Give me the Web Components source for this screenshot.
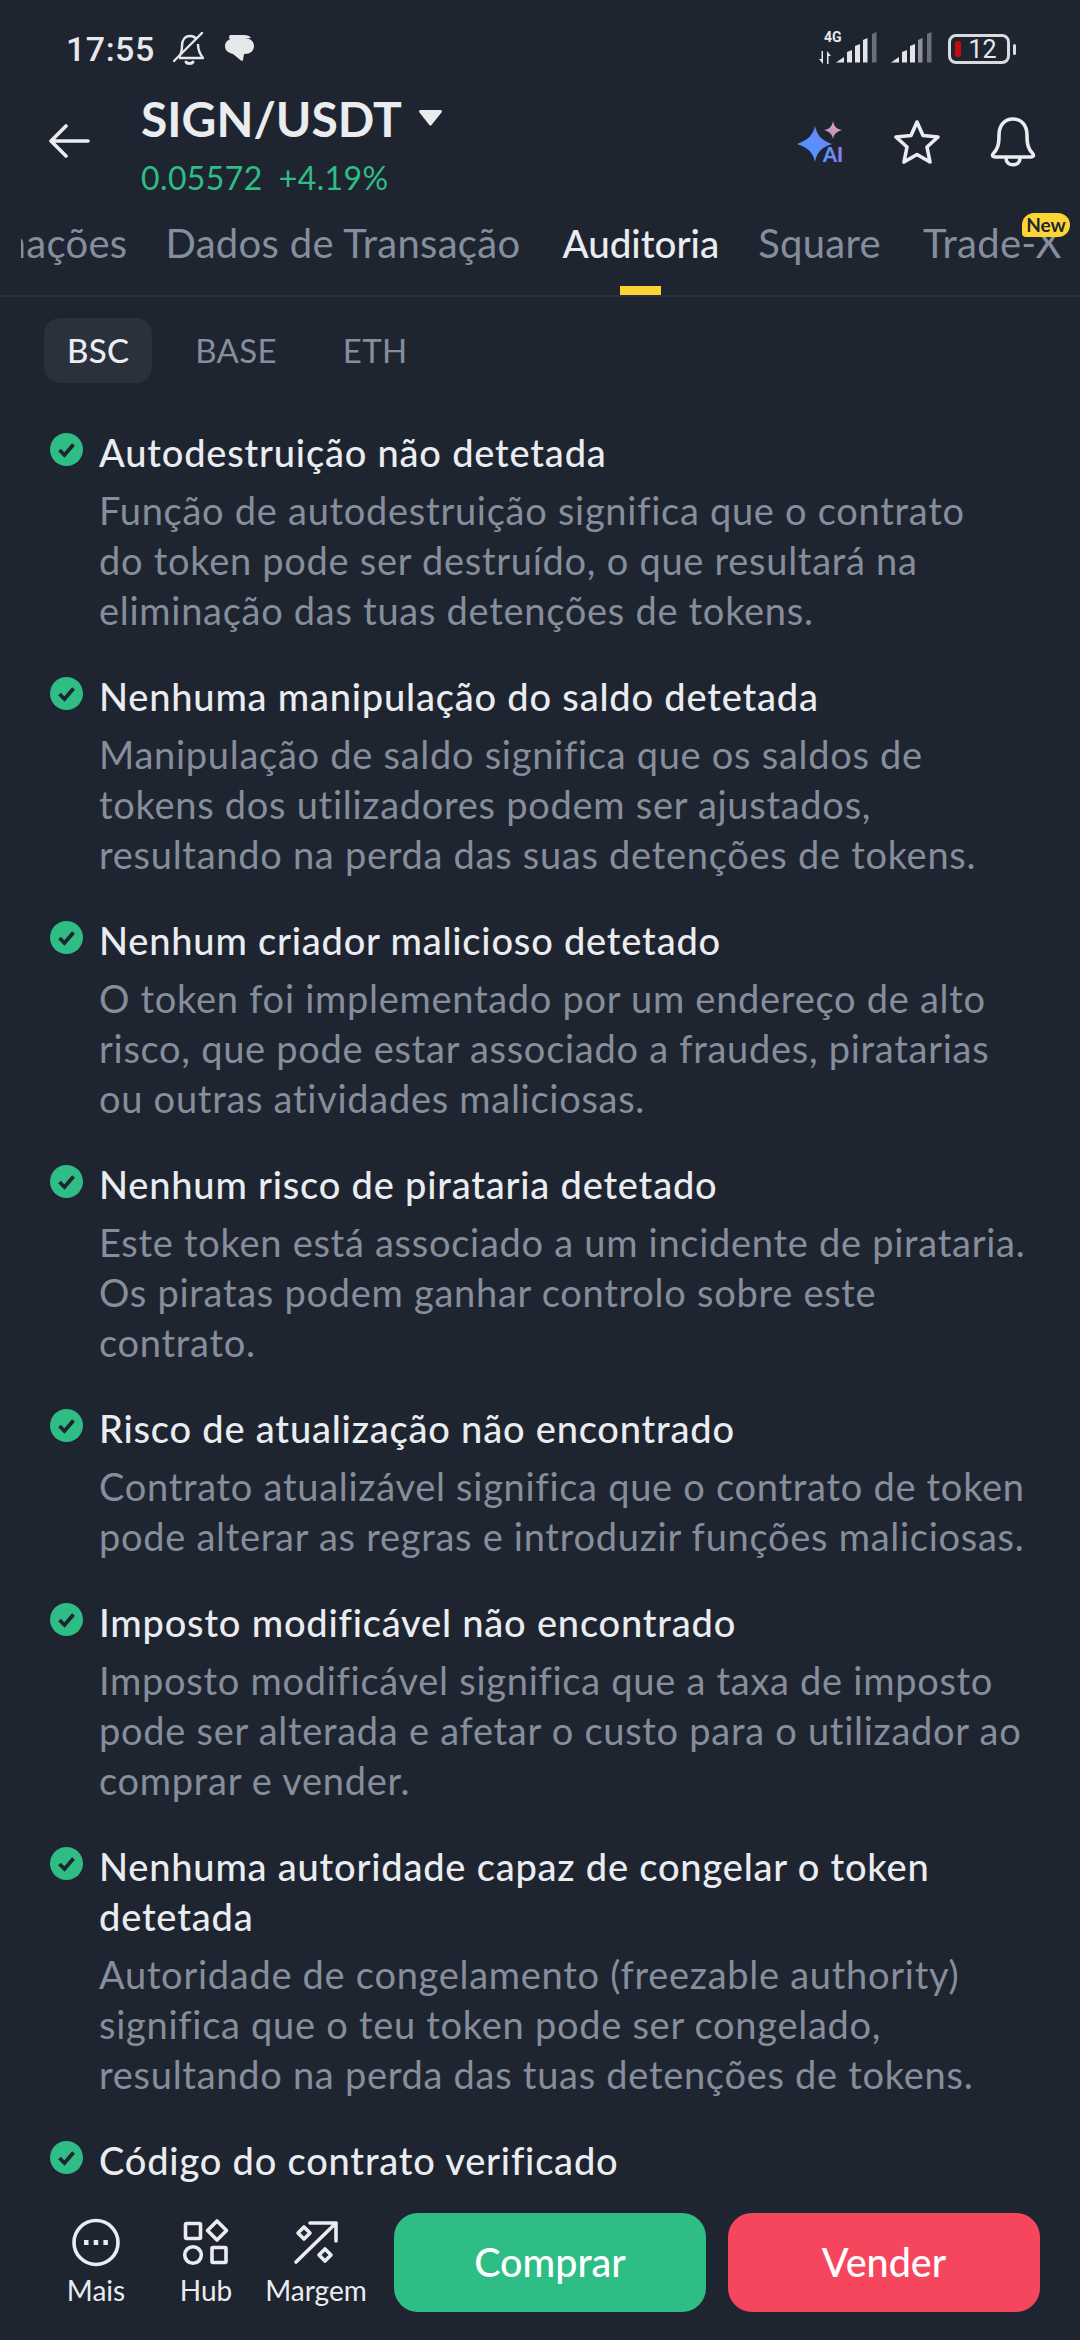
<!DOCTYPE html>
<html lang="pt">
<head>
<meta charset="utf-8">
<title>SIGN/USDT Auditoria</title>
<style>
  html, body { margin: 0; height: 100%; background: #1f2530; }
  body { font-family: Lato, "Noto Sans", sans-serif; }
</style>
</head>
<body>
<app-screen>
  <status-bar></status-bar>
  <market-header pair="SIGN/USDT" price="0.05572" change="+4.19%"></market-header>
  <tab-strip></tab-strip>
  <chain-pills></chain-pills>
  <audit-list>
    <audit-item heading="Autodestruição não detetada">Função de autodestruição significa que o contrato
do token pode ser destruído, o que resultará na
eliminação das tuas detenções de tokens.</audit-item>
    <audit-item heading="Nenhuma manipulação do saldo detetada">Manipulação de saldo significa que os saldos de
tokens dos utilizadores podem ser ajustados,
resultando na perda das suas detenções de tokens.</audit-item>
    <audit-item heading="Nenhum criador malicioso detetado">O token foi implementado por um endereço de alto
risco, que pode estar associado a fraudes, piratarias
ou outras atividades maliciosas.</audit-item>
    <audit-item heading="Nenhum risco de pirataria detetado">Este token está associado a um incidente de pirataria.
Os piratas podem ganhar controlo sobre este
contrato.</audit-item>
    <audit-item heading="Risco de atualização não encontrado">Contrato atualizável significa que o contrato de token
pode alterar as regras e introduzir funções maliciosas.</audit-item>
    <audit-item heading="Imposto modificável não encontrado">Imposto modificável significa que a taxa de imposto
pode ser alterada e afetar o custo para o utilizador ao
comprar e vender.</audit-item>
    <audit-item heading="Nenhuma autoridade capaz de congelar o token
detetada">Autoridade de congelamento (freezable authority)
significa que o teu token pode ser congelado,
resultando na perda das tuas detenções de tokens.</audit-item>
    <audit-item heading="Código do contrato verificado"></audit-item>
  </audit-list>
  <action-bar></action-bar>
</app-screen>

<script>
class AppScreen extends HTMLElement {
  constructor() {
    super();
    this.attachShadow({ mode: 'open' });
    this.shadowRoot.innerHTML = `
      <style>
        :host {
          display: flex;
          flex-direction: column;
          height: 2340px;
          overflow: hidden;
          background: #1f2530;
          color: #eaecef;
        }
      </style>
      <slot></slot>
    `;
  }
}

class StatusBar extends HTMLElement {
  constructor() {
    super();
    this.attachShadow({ mode: 'open' });
    this.shadowRoot.innerHTML = `
      <style>
        :host {
          display: flex;
          align-items: center;
          flex: none;
          height: 92px;
          padding: 6px 64px 0 66px;
          box-sizing: border-box;
          color: #e6e8ec;
        }
        .time { font: 500 34px Roboto, sans-serif; letter-spacing: .5px; }
        .left { display: flex; align-items: center; }
        .bell { margin-left: 18px; }
        .chat { margin-left: 19px; }
        .right { margin-left: auto; display: flex; align-items: center; height: 34px; }
        .net { position: relative; width: 58px; height: 34px; }
        .net b { position: absolute; left: 5px; top: -3px; font: 700 14px Roboto, sans-serif; }
        .batt {
          position: relative; display: flex; align-items: center; justify-content: center;
          width: 62px; height: 30px; margin-left: 16px; box-sizing: border-box;
          border: 3px solid #d9dbdf; border-radius: 8px;
          font: 400 25px/1 Roboto, sans-serif; padding-left: 7px;
        }
        .batt i { position: absolute; left: 4px; top: 4px; width: 6px; height: 16px; background: #c00d0d; border-radius: 2px; }
        .nub { width: 3px; height: 11px; margin-left: 3px; background: #d9dbdf; border-radius: 2px; }
        svg { display: block; }
      </style>
      <div class="left">
        <span class="time">17:55</span>
        <svg class="bell" width="33" height="34" viewBox="0 0 33 34" fill="none" stroke="#e6e8ec" stroke-width="2.4" stroke-linejoin="round">
          <path d="M6 25c2-3 3-6 3-11 0-6 3-10 8-10 3 0 5 1 6.500 3M25 12c0 5 1 9 5 14H6"/>
          <path d="M13 30c1 2 6 2 7 0" stroke-width="3" stroke-linecap="round"/>
          <path d="M1 29L29 1" stroke-linecap="round"/>
        </svg>
        <svg class="chat" width="29" height="30" viewBox="0 0 29 30" fill="#e6e8ec">
          <path d="M5 1h14c3 0 6 1 7 3l-20 1C4 5 3 4 5 1z"/>
          <path d="M11 4h8c6 0 10 3 10 8s-4 8-9 8h-1l-1 6c-.3 1-1 1-2 .5L8 20c-4-1-8-3-8-8s5-8 11-8z"/>
        </svg>
      </div>
      <div class="right">
        <div class="net">
          <b>4G</b>
          <svg style="position:absolute;left:0;top:19px" width="14" height="13" viewBox="0 0 14 13" fill="#e6e8ec">
            <path d="M0 8h2.500V0h1.500v13zM8 13V0l4 5h-2.500v8z"/>
          </svg>
          <svg style="position:absolute;left:17px;top:0" width="41" height="31" viewBox="0 0 41 31">
            <g fill="#e2e4e7"><path d="M0 30.500L8 25v5.500zM11 20l5-2v12.500h-5zM19 14l5-2v18.500h-5z"/><path d="M27 8l4.500-2v24.500H27z"/></g>
            <path d="M36 2l4.500-2v30.500H36z" fill="#6b7077"/>
          </svg>
        </div>
        <svg style="margin-left:14px;margin-top:-3px" width="41" height="31" viewBox="0 0 41 31">
          <path d="M0 30.500L8 25v5.500zM11 20l5-2v12.500h-5zM19 14l5-2v18.500h-5z" fill="#e2e4e7"/>
          <path d="M27 8l4.500-2v24.500H27z" fill="#8d9197"/>
          <path d="M36 2l4.500-2v30.500H36z" fill="#6b7077"/>
        </svg>
        <div class="batt"><i></i>12</div>
        <div class="nub"></div>
      </div>
    `;
  }
}

class MarketHeader extends HTMLElement {
  constructor() {
    super();
    this.attachShadow({ mode: 'open' });
  }

  connectedCallback() {
    this.shadowRoot.innerHTML = `
      <style>
        :host {
          display: flex;
          align-items: flex-start;
          flex: none;
          height: 121px;
          padding-left: 49px;
          padding-right: 44px;
          box-sizing: border-box;
        }
        svg { display: block; }
        .back { margin: 32px 51px 0 0; }
        .pair { display: flex; align-items: center; gap: 17px; height: 52px; font-weight: 700; font-size: 48px; color: #eaecef; }
        .price { display: flex; gap: 16px; margin-top: 11px; font-size: 32px; line-height: 46px; color: #2ebd85; letter-spacing: .4px; }
        .actions { margin-left: auto; display: flex; align-items: center; gap: 50px; margin-top: 25px; }
      </style>
      <svg class="back" width="41" height="34" viewBox="0 0 41 34" fill="none" stroke="#eaecef" stroke-width="3.600" stroke-linecap="round" stroke-linejoin="round">
        <path d="M39 17H3M17 2L2 17l15 15"/>
      </svg>
      <div>
        <div class="pair">${this.getAttribute('pair')}
          <svg width="23" height="16" viewBox="0 0 23 16" fill="#eaecef"><path d="M1.500 0h20c1.300 0 2 1.500 1 2.500l-10 12.500c-.7.800-1.500.800-2.200 0L.5 2.500C-.4 1.500.3 0 1.500 0z"/></svg>
        </div>
        <div class="price"><span>${this.getAttribute('price')}</span><span>${this.getAttribute('change')}</span></div>
      </div>
      <div class="actions">
        <svg width="48" height="46" viewBox="0 0 48 46">
          <defs>
            <linearGradient id="s1" x1="0" y1="1" x2="1" y2="0"><stop offset="0" stop-color="#3f9bff"/><stop offset="1" stop-color="#7a80f5"/></linearGradient>
            <linearGradient id="s2" x1="0" y1="1" x2="1" y2="0"><stop offset="0" stop-color="#a78cf0"/><stop offset="1" stop-color="#f3a88c"/></linearGradient>
            <linearGradient id="s3" x1="0" y1="0" x2="1" y2="0"><stop offset="0" stop-color="#4f9cf5"/><stop offset="1" stop-color="#8f79ee"/></linearGradient>
          </defs>
          <path d="M19 7c2 9 6 14 17 18-11 4-15 8-17 18-2-10-7-14-18-18 11-4 16-9 18-18z" fill="url(#s1)"/>
          <path d="M37 2c1 5 3 8 9 9-6 2-8 4-9 9-1-5-3-7-9-9 6-1 8-4 9-9z" fill="url(#s2)"/>
          <text x="27" y="43" font-family="Lato, sans-serif" font-size="20" font-weight="900" fill="url(#s3)">AI</text>
        </svg>
        <svg width="46" height="46" viewBox="0 0 46 46" fill="none" stroke="#eaecef" stroke-width="3.600" stroke-linejoin="round">
          <path d="M23 3l6 13.500 15 1.500-11 10 3 15-13-7.500L10 43l3-15L2 18l15-1.500z"/>
        </svg>
        <svg width="46" height="50" viewBox="0 0 46 50" fill="none" stroke="#eaecef" stroke-width="3.600" stroke-linejoin="round" stroke-linecap="round">
          <path d="M23 2c-9 0-14 7-14 16 0 9-1 14-6 19-1 2 0 3 2 3h36c2 0 3-1 2-3-5-5-6-10-6-19 0-9-5-16-14-16z"/>
          <path d="M16 41c0 9 14 9 14 0"/>
        </svg>
      </div>
    `;
  }
}

class TabStrip extends HTMLElement {
  constructor() {
    super();
    this.attachShadow({ mode: 'open' });
    const tabs = ['Informações', 'Dados de Transação', 'Auditoria', 'Square', 'Trade-X'];
    this.shadowRoot.innerHTML = `
      <style>
        :host {
          display: block;
          flex: none;
          height: 84px;
          border-bottom: 2px solid #2a303c;
          box-sizing: border-box;
          padding-left: 21px;
        }
        .clip { overflow: hidden; height: 100%; }
        .row { display: flex; gap: 42px; margin-left: -113px; width: max-content; font-size: 40px; letter-spacing: .3px; color: #848e9c; }
        .tab { position: relative; height: 82px; line-height: 60px; }
        .tab:first-child { margin-right: -4px; }
        .on { color: #eaecef; font-weight: 500; font-size: 38.5px; letter-spacing: 0; margin-right: -3px; }
        .on::after {
          content: ''; position: absolute; left: 50%; bottom: 0; width: 41px; height: 9px;
          margin-left: -21px; background: #fcd535;
        }
        .new {
          position: absolute; right: -8px; top: 0; padding: 0 4px; height: 24px;
          font-size: 19px; line-height: 24px; letter-spacing: 0; font-weight: 700; color: #1f2530;
          background: #fcd535; border-radius: 12px 12px 12px 4px;
        }
      </style>
      <div class="clip"><div class="row">
        ${tabs.map(t => `<div class="tab${t === 'Auditoria' ? ' on' : ''}">${t}${t === 'Trade-X' ? '<span class="new">New</span>' : ''}</div>`).join('')}
      </div></div>
    `;
  }
}

class ChainPills extends HTMLElement {
  constructor() {
    super();
    this.attachShadow({ mode: 'open' });
    this.shadowRoot.innerHTML = `
      <style>
        :host {
          display: flex;
          flex: none;
          padding: 21px 0 0 44px;
          font-size: 33px;
          letter-spacing: .3px;
          color: #848e9c;
        }
        span { display: block; padding: 0 23px; line-height: 65px; margin-right: 20px; }
        .on { background: #2a303c; color: #eaecef; border-radius: 16px; font-weight: 500; }
      </style>
      <span class="on">BSC</span><span>BASE</span><span>ETH</span>
    `;
  }
}

class AuditList extends HTMLElement {
  constructor() {
    super();
    this.attachShadow({ mode: 'open' });
    this.shadowRoot.innerHTML = `
      <style>
        :host {
          display: flex;
          flex-direction: column;
          flex: 1;
          min-height: 0;
          overflow: hidden;
          gap: 36px;
          padding: 44px 0 0 50px;
        }
      </style>
      <slot></slot>
    `;
  }
}

class AuditItem extends HTMLElement {
  constructor() {
    super();
    this.attachShadow({ mode: 'open' });
  }

  connectedCallback() {
    this.shadowRoot.innerHTML = `
      <style>
        :host { display: flex; gap: 16px; flex: none; }
        svg { flex: none; display: block; margin-top: 6px; }
        .t { font-size: 38px; line-height: 50px; font-weight: 500; letter-spacing: .8px; color: #eaecef; white-space: pre-line; margin-bottom: 8px; }
        .d { font-size: 38px; line-height: 50px; letter-spacing: .72px; color: #868e9b; white-space: pre-line; }
      </style>
      <svg width="33" height="33" viewBox="0 0 33 33">
        <circle cx="16.500" cy="16.500" r="16.500" fill="#2ebd85"/>
        <path d="M9.500 17l5 5 9-10.500" fill="none" stroke="#1f2530" stroke-width="3.800"/>
      </svg>
      <div>
        <div class="t">${this.getAttribute('heading')}</div>
        <div class="d"><slot></slot></div>
      </div>
    `;
  }
}

class ActionBar extends HTMLElement {
  constructor() {
    super();
    this.attachShadow({ mode: 'open' });
    this.shadowRoot.innerHTML = `
      <style>
        :host {
          display: flex;
          align-items: flex-start;
          flex: none;
          height: 148px;
          padding: 21px 41px 0 41px;
          box-sizing: border-box;
          background: #1f2530;
        }
        .nav { display: flex; flex-direction: column; align-items: center; width: 110px; font-size: 28px; color: #eaecef; }
        .nav svg { display: block; width: 52px; height: 52px; margin-top: 3px; }
        .nav span { line-height: 34px; margin-top: 5px; }
        .btn {
          flex: none; width: 312px; height: 99px; line-height: 97px; text-align: center;
          border-radius: 24px; color: #fff; font-size: 39.5px; font-weight: 500;
        }
        .buy { background: #2ebd85; margin-left: 23px; }
        .sell { background: #f6465d; margin-left: 22px; }
        .icons { display: flex; }
      </style>
      <div class="icons">
        <div class="nav">
          <svg viewBox="0 0 52 52" fill="none" stroke="#eaecef" stroke-width="3.600">
            <circle cx="26" cy="26.500" r="22"/>
            <path d="M14 26.500h4.500M23.700 26.500h4.500M33.400 26.500h4.500" stroke-width="5"/>
          </svg>
          <span>Mais</span>
        </div>
        <div class="nav">
          <svg viewBox="0 0 52 52" fill="none" stroke="#eaecef" stroke-width="3.600" stroke-linejoin="round">
            <rect x="5.500" y="7.500" width="15" height="15" rx="1"/>
            <path d="M37 5l9.500 9.500L37 24l-9.500-9.500z"/>
            <circle cx="13" cy="39" r="8.300"/>
            <rect x="32" y="31.500" width="14" height="15" rx="1"/>
          </svg>
          <span>Hub</span>
        </div>
        <div class="nav">
          <svg viewBox="0 0 52 52" fill="none" stroke="#eaecef" stroke-width="3.600" stroke-linejoin="round" stroke-linecap="round">
            <path d="M6 46L46 7M20 7h26v18"/>
            <path d="M14 11l6 6-6 6-6-6zM35 33l6 6-6 6-6-6z"/>
          </svg>
          <span>Margem</span>
        </div>
      </div>
      <div class="btn buy">Comprar</div>
      <div class="btn sell">Vender</div>
    `;
  }
}

customElements.define('app-screen', AppScreen);
customElements.define('status-bar', StatusBar);
customElements.define('market-header', MarketHeader);
customElements.define('tab-strip', TabStrip);
customElements.define('chain-pills', ChainPills);
customElements.define('audit-list', AuditList);
customElements.define('audit-item', AuditItem);
customElements.define('action-bar', ActionBar);
</script>
</body>
</html>
